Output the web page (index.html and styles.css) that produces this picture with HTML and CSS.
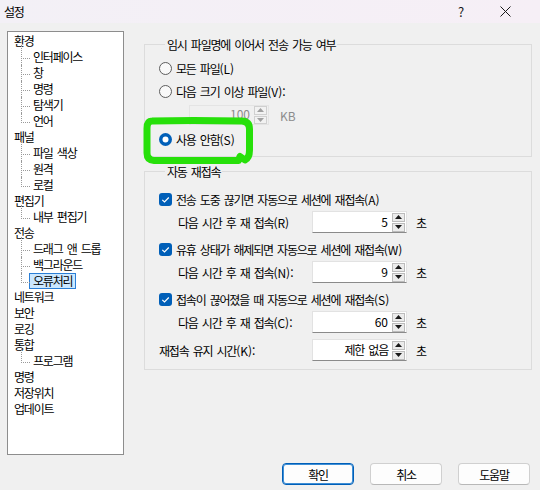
FILE: index.html
```html
<!DOCTYPE html>
<html lang="ko">
<head>
  <meta charset="UTF-8" />
  <title>설정</title>
  <link rel="stylesheet" href="styles.css">
</head>
<body>
<div class="window">

  <!-- Title bar -->
  <header class="titlebar">
    <span class="title">설정</span>
    <span class="help">?</span>
    <span class="close">
      <svg width="11" height="11" viewBox="0 0 11 11"><path d="M0.5 0.5 L10.5 10.5 M10.5 0.5 L0.5 10.5" stroke="#1a1a1a" stroke-width="1"/></svg>
    </span>
  </header>

  <div class="main">

    <!-- Category tree -->
    <ul class="tree">
      <li><span>환경</span>
        <ul class="sub">
          <li><span>인터페이스</span></li>
          <li><span>창</span></li>
          <li><span>명령</span></li>
          <li><span>탐색기</span></li>
          <li><span>언어</span></li>
        </ul>
      </li>
      <li><span>패널</span>
        <ul class="sub">
          <li><span>파일 색상</span></li>
          <li><span>원격</span></li>
          <li><span>로컬</span></li>
        </ul>
      </li>
      <li><span>편집기</span>
        <ul class="sub">
          <li><span>내부 편집기</span></li>
        </ul>
      </li>
      <li><span>전송</span>
        <ul class="sub">
          <li><span>드래그 앤 드롭</span></li>
          <li><span>백그라운드</span></li>
          <li><span class="selected">오류처리</span></li>
        </ul>
      </li>
      <li><span>네트워크</span></li>
      <li><span>보안</span></li>
      <li><span>로깅</span></li>
      <li><span>통합</span>
        <ul class="sub">
          <li><span>프로그램</span></li>
        </ul>
      </li>
      <li><span>명령</span></li>
      <li><span>저장위치</span></li>
      <li><span>업데이트</span></li>
    </ul>

    <div class="pane">

      <!-- Resume options -->
      <fieldset class="group group-resume">
        <legend>임시 파일명에 이어서 전송 가능 여부</legend>
        <div class="row radio-row">
          <svg class="radio" width="13" height="13" viewBox="0 0 13 13"><circle cx="6.5" cy="6.5" r="6" fill="#f9f9f9" stroke="#5d5d5d"/></svg>
          <span>모든 파일<span class="en">(L)</span></span>
        </div>
        <div class="row radio-row">
          <svg class="radio" width="13" height="13" viewBox="0 0 13 13"><circle cx="6.5" cy="6.5" r="6" fill="#f9f9f9" stroke="#5d5d5d"/></svg>
          <span>다음 크기 이상 파일<span class="en">(V):</span></span>
        </div>
        <div class="row size-row">
          <div class="spin disabled">
            <span class="value en">100</span>
            <span class="arrows">
              <span class="arrow"><svg width="7" height="4" viewBox="0 0 7 4"><path d="M0 4 L3.5 0 L7 4 Z" fill="#a0a0a0"/></svg></span>
              <span class="arrow"><svg width="7" height="4" viewBox="0 0 7 4"><path d="M0 0 L3.5 4 L7 0 Z" fill="#a0a0a0"/></svg></span>
            </span>
          </div>
          <span class="unit muted en">KB</span>
        </div>
        <div class="row radio-row last">
          <svg class="radio" width="13" height="13" viewBox="0 0 13 13"><circle cx="6.5" cy="6.5" r="6.5" fill="#005fb8"/><circle cx="6.5" cy="6.5" r="3" fill="#fff"/></svg>
          <span>사용 안함<span class="en">(S)</span></span>
        </div>
      </fieldset>

      <!-- Auto reconnect -->
      <fieldset class="group group-reconnect">
        <legend>자동 재접속</legend>

        <div class="row check-row first">
          <svg class="check" width="13" height="13" viewBox="0 0 13 13"><rect width="13" height="13" rx="3" fill="#005fb8"/><path d="M3.3 6.9 L5.5 9 L9.8 4.5" fill="none" stroke="#fff" stroke-width="1.2"/></svg>
          <span>전송 도중 끊기면 자동으로 세션에 재접속<span class="en">(A)</span></span>
        </div>
        <div class="row spin-row">
          <span class="label">다음 시간 후 재 접속<span class="en">(R)</span></span>
          <div class="spin">
            <span class="value en">5</span>
            <span class="arrows">
              <span class="arrow"><svg width="7" height="4" viewBox="0 0 7 4"><path d="M0 4 L3.5 0 L7 4 Z" fill="#1a1a1a"/></svg></span>
              <span class="arrow"><svg width="7" height="4" viewBox="0 0 7 4"><path d="M0 0 L3.5 4 L7 0 Z" fill="#1a1a1a"/></svg></span>
            </span>
          </div>
          <span class="unit">초</span>
        </div>

        <div class="row check-row">
          <svg class="check" width="13" height="13" viewBox="0 0 13 13"><rect width="13" height="13" rx="3" fill="#005fb8"/><path d="M3.3 6.9 L5.5 9 L9.8 4.5" fill="none" stroke="#fff" stroke-width="1.2"/></svg>
          <span>유휴 상태가 해제되면 자동으로 세션에 재접속<span class="en">(W)</span></span>
        </div>
        <div class="row spin-row">
          <span class="label">다음 시간 후 재 접속<span class="en">(N):</span></span>
          <div class="spin">
            <span class="value en">9</span>
            <span class="arrows">
              <span class="arrow"><svg width="7" height="4" viewBox="0 0 7 4"><path d="M0 4 L3.5 0 L7 4 Z" fill="#1a1a1a"/></svg></span>
              <span class="arrow"><svg width="7" height="4" viewBox="0 0 7 4"><path d="M0 0 L3.5 4 L7 0 Z" fill="#1a1a1a"/></svg></span>
            </span>
          </div>
          <span class="unit">초</span>
        </div>

        <div class="row check-row">
          <svg class="check" width="13" height="13" viewBox="0 0 13 13"><rect width="13" height="13" rx="3" fill="#005fb8"/><path d="M3.3 6.9 L5.5 9 L9.8 4.5" fill="none" stroke="#fff" stroke-width="1.2"/></svg>
          <span>접속이 끊어졌을 때 자동으로 세션에 재접속<span class="en">(S)</span></span>
        </div>
        <div class="row spin-row">
          <span class="label">다음 시간 후 재 접속<span class="en">(C):</span></span>
          <div class="spin">
            <span class="value en">60</span>
            <span class="arrows">
              <span class="arrow"><svg width="7" height="4" viewBox="0 0 7 4"><path d="M0 4 L3.5 0 L7 4 Z" fill="#1a1a1a"/></svg></span>
              <span class="arrow"><svg width="7" height="4" viewBox="0 0 7 4"><path d="M0 0 L3.5 4 L7 0 Z" fill="#1a1a1a"/></svg></span>
            </span>
          </div>
          <span class="unit">초</span>
        </div>

        <div class="row spin-row keep-row">
          <span class="label">재접속 유지 시간<span class="en">(K):</span></span>
          <div class="spin">
            <span class="value">제한 없음</span>
            <span class="arrows">
              <span class="arrow"><svg width="7" height="4" viewBox="0 0 7 4"><path d="M0 4 L3.5 0 L7 4 Z" fill="#1a1a1a"/></svg></span>
              <span class="arrow"><svg width="7" height="4" viewBox="0 0 7 4"><path d="M0 0 L3.5 4 L7 0 Z" fill="#1a1a1a"/></svg></span>
            </span>
          </div>
          <span class="unit">초</span>
        </div>
      </fieldset>
    </div>
  </div>

  <!-- Dialog buttons -->
  <div class="buttons">
    <button class="btn default">확인</button>
    <button class="btn">취소</button>
    <button class="btn">도움말</button>
  </div>

  <!-- Hand-drawn highlight -->
  <svg class="mark" width="540" height="490" viewBox="0 0 540 490">
    <path d="M152 121 C185 120 220 120.5 242 121 Q249.5 121.5 249.5 129 L249.5 150 Q249.5 158 245 160 L240 156.5 L238.5 160.5 L154 160.5 Q147 160 147 153 L147 128.5 Q147 121 152 121 Z"
      fill="none" stroke="#27e00a" stroke-width="7" stroke-linejoin="round"/>
  </svg>
</div>
</body>
</html>
```

FILE: styles.css
```css
/* Basic Reset */
* {
  margin: 0;
  padding: 0;
  box-sizing: border-box;
}

body {
  font-family: "Noto Sans CJK KR", "Liberation Sans", sans-serif;
  font-size: 12px;
  letter-spacing: -1.2px;
  word-spacing: 2px;
  color: #000;
  background: #f0f0f0;
}

/* Latin runs keep their natural width */
.en {
  letter-spacing: 0;
  word-spacing: 0;
}

.window {
  position: relative;
  width: 540px;
  height: 490px;
  background: #f0f0f0;
}

/* Title bar */
.titlebar {
  height: 23px;
  display: flex;
  align-items: center;
  padding-left: 4px;
  background: linear-gradient(to right, #f3f0f6, #f6eff6);
}

.title {
  flex: 1;
  line-height: 16px;
}

.help {
  width: 8px;
  margin-right: 34px;
  font-size: 13px;
  letter-spacing: 0;
  color: #1a1a1a;
}

.close {
  width: 11px;
  height: 11px;
  margin-right: 29px;
  display: flex;
}

/* Body */
.main {
  display: flex;
  padding: 8px 0 0 7px;
}

/* Tree */
.tree {
  list-style: none;
  width: 117px;
  height: 424px;
  padding: 1px 0 0 2px;
  background: #fff;
  border: 1px solid #8d8d8d;
  flex-shrink: 0;
}

.tree ul {
  list-style: none;
}

.tree li {
  line-height: 16px;
}

.tree li span {
  display: inline-block;
  vertical-align: top;
  height: 16px;
  line-height: 14px;
  padding: 0 3px;
  border: 1px solid transparent;
  white-space: nowrap;
}

.tree span.selected {
  background: #cce8ff;
  border-color: #2b7fd6;
}

.sub {
  margin-left: 19px;
}

.sub li {
  position: relative;
}

.sub li::before {
  content: "";
  position: absolute;
  left: -8px;
  top: 0;
  width: 8px;
  height: 9px;
  border-left: 1px dotted #9a9a9a;
  border-bottom: 1px dotted #9a9a9a;
}

.sub li:first-child::before {
  top: -4px;
  height: 13px;
}

.sub li:not(:last-child)::after {
  content: "";
  position: absolute;
  left: -8px;
  top: 9px;
  bottom: 0;
  border-left: 1px dotted #9a9a9a;
}

/* Right side */
.pane {
  width: 388px;
  margin-left: 20px;
  margin-top: 5px;
}

.group {
  border: 1px solid #dcdcdc;
  padding: 0 0 0 14px;
  min-width: 0;
}

.group legend {
  line-height: 17px;
  margin-left: 6px;
  padding: 0 2px;
}

.row {
  display: flex;
  align-items: center;
  white-space: nowrap;
}

.radio,
.check {
  flex-shrink: 0;
  margin-right: 4px;
}

/* Resume group */
.group-resume {
  padding-top: 4px;
  padding-bottom: 5px;
}

.radio-row {
  height: 23px;
}

.size-row {
  height: 20px;
  margin-top: 2px;
  margin-bottom: 3px;
  padding-left: 30px;
}

.size-row .spin {
  width: 80px;
  height: 20px;
}

.size-row .spin .value {
  line-height: 16px;
}

.unit {
  margin-left: 9px;
}

.size-row .unit {
  margin-left: 11px;
}

.muted {
  color: #8c8c8c;
}

/* Reconnect group */
.group-reconnect {
  margin-top: 6px;
  padding-top: 8px;
  padding-bottom: 8px;
}

.check-row {
  height: 22px;
  margin-top: 5px;
}

.check-row.first {
  margin-top: 0;
}

.spin-row {
  height: 22px;
  margin-top: 1px;
}

.spin-row .label {
  width: 134px;
  margin-left: 19px;
}

.keep-row {
  margin-top: 6px;
}

.keep-row .label {
  width: 153px;
  margin-left: 0;
}

/* Spin box */
.spin {
  width: 95px;
  height: 22px;
  display: flex;
  align-items: stretch;
  background: #fff;
  border: 1px solid #e2e2e2;
  border-bottom-color: #8a8a8a;
}

.spin .value {
  flex: 1;
  text-align: right;
  line-height: 19px;
  padding-right: 4px;
}

.spin .arrows {
  display: flex;
  flex-direction: column;
  justify-content: center;
  gap: 1px;
  width: 13px;
  margin-right: 1px;
}

.spin .arrow {
  height: 9px;
  display: flex;
  align-items: center;
  justify-content: center;
  background: #ececec;
  border: 1px solid #bcbcbc;
}

.spin.disabled {
  background: #f0f0f0;
  border-color: #e4e4e4;
}

.spin.disabled .value {
  color: #8c8c8c;
}

.spin.disabled .arrow {
  background: #f2f2f2;
  border-color: #d0d0d0;
}

/* Buttons */
.buttons {
  display: flex;
  justify-content: flex-end;
  gap: 16px;
  margin-top: 8px;
  padding-right: 10px;
}

.btn {
  width: 72px;
  height: 22px;
  font-family: inherit;
  font-size: 12px;
  letter-spacing: -1.2px;
  word-spacing: 2px;
  background: #fdfdfd;
  border: 1px solid #d0d0d0;
  border-bottom-color: #b8b8b8;
  border-radius: 4px;
  color: #000;
}

.btn.default {
  border: 1px solid #005fb8;
  box-shadow: inset 0 0 0 1px #3f8fd6;
}

/* Highlight stroke over the dialog */
.mark {
  position: absolute;
  left: 0;
  top: 0;
  pointer-events: none;
}
```
